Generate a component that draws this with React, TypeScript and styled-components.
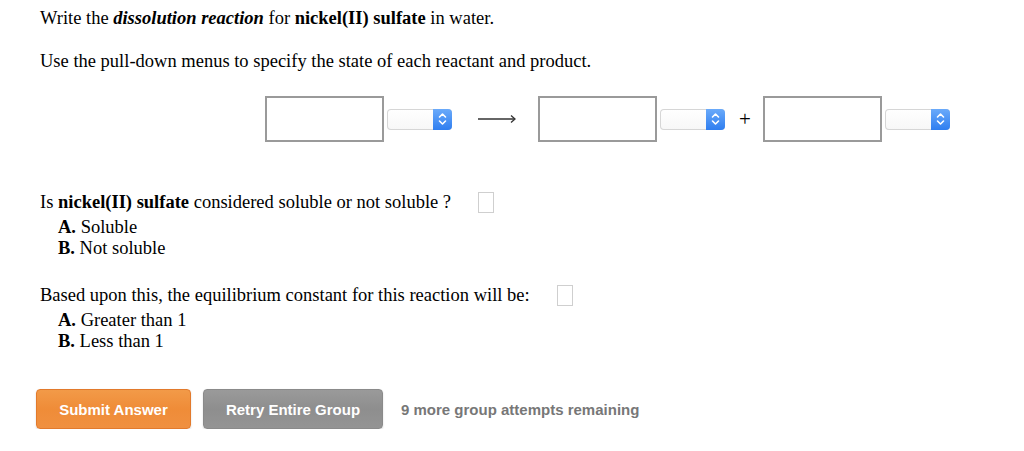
import React from "react";
import styled, { createGlobalStyle } from "styled-components";

const Global = createGlobalStyle`
  html, body { margin: 0; padding: 0; background: #fff; }
  body { font-family: "Liberation Serif", "Times New Roman", serif; color: #000; }
`;

const Page = styled.div`
  padding: 8px 0 0 40px;
  font-size: 18.5px;
  line-height: 21px;
`;

const Line = styled.p<{ $mb?: number }>`
  margin: 0 0 ${(p) => p.$mb ?? 0}px 0;
`;

const Equation = styled.div`
  display: flex;
  align-items: center;
  margin: 24px 0 50px 225px;
  height: 46px;
`;

const AnswerBox = styled.div`
  width: 115px;
  height: 42px;
  border: 2px solid #9a9a9a;
  background: #fff;
`;

const SelectWrap = styled.div`
  display: flex;
  width: 65px;
  height: 21px;
  margin-left: 3px;
  box-sizing: border-box;
  border-radius: 4px;
  overflow: hidden;
  box-shadow: inset 0 0 0 1px #d6d6d6;
  background: linear-gradient(#fff, #f7f7f7);
`;

const SelectBody = styled.div`
  flex: 1;
`;

const SelectArrow = styled.div`
  width: 19px;
  display: flex;
  align-items: center;
  justify-content: center;
  background: linear-gradient(#6aaafa, #2f7ef0);
`;

const Arrow = styled.span`
  display: inline-flex;
  margin: 0 22px 0 26px;
`;

const Plus = styled.span`
  font-size: 21px;
  margin: 0 12px 0 14px;
  line-height: 1;
`;

const Question = styled.div`
  display: flex;
  align-items: center;
  height: 21px;
  margin-bottom: 4px;
  white-space: pre;
`;

const Blank = styled.span<{ $ml: number }>`
  display: inline-block;
  width: 14px;
  height: 19px;
  border: 1px solid #cfcfcf;
  margin-left: ${(p) => p.$ml}px;
`;

const Option = styled.div`
  padding-left: 18px;
`;

const Gap = styled.div<{ $h: number }>`
  height: ${(p) => p.$h}px;
`;

const Actions = styled.div`
  display: flex;
  align-items: center;
  margin-left: -4px;
  font-family: "Liberation Sans", Arial, sans-serif;
`;

const Btn = styled.div<{ $variant: "orange" | "gray"; $w: number }>`
  box-sizing: border-box;
  width: ${(p) => p.$w}px;
  height: 40px;
  border-radius: 4px;
  display: flex;
  align-items: center;
  justify-content: center;
  color: #fff;
  font-weight: bold;
  font-size: 15px;
  margin-right: 12px;
  box-shadow: 0 1px 2px rgba(0, 0, 0, 0.15);
  ${(p) =>
    p.$variant === "orange"
      ? `background: linear-gradient(#f29a48, #ef8c38 50%, #f09040);
         border: 1px solid #e27a2c;`
      : `background: linear-gradient(#9a9a9a, #8e8e8e 50%, #949494);
         border: 1px solid #8a8a8a;`}
`;

const Remaining = styled.span`
  margin-left: 6px;
  color: #777;
  font-weight: bold;
  font-size: 15px;
`;

const Select = () => (
  <SelectWrap>
    <SelectBody />
    <SelectArrow>
      <svg width="9" height="14" viewBox="0 0 9 14" fill="none" stroke="#fff" strokeWidth="1.6" strokeLinecap="round" strokeLinejoin="round">
        <path d="M1.5 5 L4.5 2 L7.5 5" />
        <path d="M1.5 9 L4.5 12 L7.5 9" />
      </svg>
    </SelectArrow>
  </SelectWrap>
);

export default function App() {
  return (
    <>
      <Global />
      <Page>
        <Line $mb={22}>
          Write the <b><i>dissolution reaction</i></b> for <b>nickel(II) sulfate</b> in water.
        </Line>
        <Line>Use the pull-down menus to specify the state of each reactant and product.</Line>
        <Equation>
          <AnswerBox />
          <Select />
          <Arrow>
            <svg width="38" height="10" viewBox="0 0 38 10" fill="none" stroke="#333" strokeWidth="1.3">
              <path d="M0 5 H36" />
              <path d="M33 1.5 L37 5 L33 8.5" />
            </svg>
          </Arrow>
          <AnswerBox />
          <Select />
          <Plus>+</Plus>
          <AnswerBox />
          <Select />
        </Equation>
        <Question>
          Is <b>nickel(II) sulfate</b> considered soluble or not soluble ?
          <Blank $ml={27} />
        </Question>
        <Option><b>A.</b> Soluble</Option>
        <Option><b>B.</b> Not soluble</Option>
        <Gap $h={26} />
        <Question>
          Based upon this, the equilibrium constant for this reaction will be:
          <Blank $ml={27} />
        </Question>
        <Option><b>A.</b> Greater than 1</Option>
        <Option><b>B.</b> Less than 1</Option>
        <Gap $h={37} />
        <Actions>
          <Btn $variant="orange" $w={155}>Submit Answer</Btn>
          <Btn $variant="gray" $w={180}>Retry Entire Group</Btn>
          <Remaining>9 more group attempts remaining</Remaining>
        </Actions>
      </Page>
    </>
  );
}
